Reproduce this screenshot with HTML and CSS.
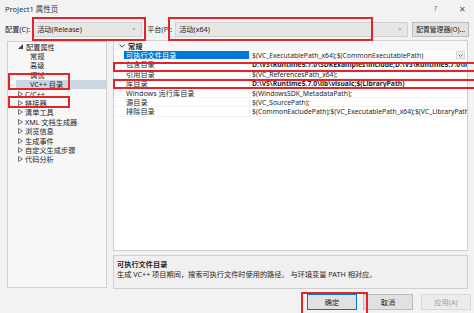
FILE: index.html
```html
<!DOCTYPE html>
<html lang="zh-CN">
<head>
    <meta charset="UTF-8">
    <meta name="viewport" content="width=device-width, initial-scale=1.0">
    <title>Project1 属性页</title>
    <link rel="stylesheet" href="styles.css">
</head>
<body>
    <div class="window">
        <!-- Barra de títol -->
        <div class="titlebar">
            <span class="title">Project1 属性页</span>
            <span class="help">?</span>
            <span class="close">✕</span>
        </div>

        <!-- Configuració i plataforma -->
        <div class="toolbar">
            <label class="lbl">配置(C):</label>
            <div class="combo combo-config"><span>活动(Release)</span><span class="arrow">⌄</span></div>
            <label class="lbl">平台(P):</label>
            <div class="combo combo-platform"><span>活动(x64)</span><span class="arrow">⌄</span></div>
            <div class="btn btn-manager">配置管理器(O)...</div>
        </div>

        <div class="main">
            <!-- Arbre de propietats -->
            <div class="tree">
                <div class="node root"><svg class="tri" width="5" height="5" viewBox="0 0 5 5"><path d="M5 0 L5 5 L0 5 Z" fill="#444"/></svg>配置属性</div>
                <div class="node leaf">常规</div>
                <div class="node leaf">高级</div>
                <div class="node leaf">调试</div>
                <div class="node leaf active">VC++ 目录</div>
                <div class="node"><svg class="tri" width="5" height="6" viewBox="0 0 5 6"><path d="M0.5 0.5 L4.5 3 L0.5 5.5 Z" fill="none" stroke="#555" stroke-width="0.8"/></svg>C/C++</div>
                <div class="node"><svg class="tri" width="5" height="6" viewBox="0 0 5 6"><path d="M0.5 0.5 L4.5 3 L0.5 5.5 Z" fill="none" stroke="#555" stroke-width="0.8"/></svg>链接器</div>
                <div class="node"><svg class="tri" width="5" height="6" viewBox="0 0 5 6"><path d="M0.5 0.5 L4.5 3 L0.5 5.5 Z" fill="none" stroke="#555" stroke-width="0.8"/></svg>清单工具</div>
                <div class="node"><svg class="tri" width="5" height="6" viewBox="0 0 5 6"><path d="M0.5 0.5 L4.5 3 L0.5 5.5 Z" fill="none" stroke="#555" stroke-width="0.8"/></svg>XML 文档生成器</div>
                <div class="node"><svg class="tri" width="5" height="6" viewBox="0 0 5 6"><path d="M0.5 0.5 L4.5 3 L0.5 5.5 Z" fill="none" stroke="#555" stroke-width="0.8"/></svg>浏览信息</div>
                <div class="node"><svg class="tri" width="5" height="6" viewBox="0 0 5 6"><path d="M0.5 0.5 L4.5 3 L0.5 5.5 Z" fill="none" stroke="#555" stroke-width="0.8"/></svg>生成事件</div>
                <div class="node"><svg class="tri" width="5" height="6" viewBox="0 0 5 6"><path d="M0.5 0.5 L4.5 3 L0.5 5.5 Z" fill="none" stroke="#555" stroke-width="0.8"/></svg>自定义生成步骤</div>
                <div class="node"><svg class="tri" width="5" height="6" viewBox="0 0 5 6"><path d="M0.5 0.5 L4.5 3 L0.5 5.5 Z" fill="none" stroke="#555" stroke-width="0.8"/></svg>代码分析</div>
            </div>

            <div class="right">
                <!-- Graella de propietats -->
                <div class="grid">
                    <div class="group"><svg class="chev" width="6" height="4" viewBox="0 0 6 4"><path d="M0.5 0.5 L3 3.2 L5.5 0.5" fill="none" stroke="#333" stroke-width="0.9"/></svg><b>常规</b></div>
                    <div class="row selected">
                        <div class="name">可执行文件目录</div>
                        <div class="value">$(VC_ExecutablePath_x64);$(CommonExecutablePath)</div>
                        <div class="drop"><svg width="5" height="3" viewBox="0 0 5 3"><path d="M0.5 0.5 L2.5 2.5 L4.5 0.5" fill="none" stroke="#555" stroke-width="0.8"/></svg></div>
                    </div>
                    <div class="row">
                        <div class="name">包含目录</div>
                        <div class="value bold">D:\VS\Runtime5.7.0\SDKExamples\include;D:\VS\Runtime5.7.0\inc</div>
                    </div>
                    <div class="row">
                        <div class="name">引用目录</div>
                        <div class="value">$(VC_ReferencesPath_x64);</div>
                    </div>
                    <div class="row">
                        <div class="name">库目录</div>
                        <div class="value bold">D:\VS\Runtime5.7.0\lib\visualc;$(LibraryPath)</div>
                    </div>
                    <div class="row">
                        <div class="name">Windows 运行库目录</div>
                        <div class="value">$(WindowsSDK_MetadataPath);</div>
                    </div>
                    <div class="row">
                        <div class="name">源目录</div>
                        <div class="value">$(VC_SourcePath);</div>
                    </div>
                    <div class="row">
                        <div class="name">排除目录</div>
                        <div class="value">$(CommonExcludePath);$(VC_ExecutablePath_x64);$(VC_LibraryPath_x64)</div>
                    </div>
                </div>

                <!-- Descripció -->
                <div class="desc">
                    <div class="desc-title">可执行文件目录</div>
                    <div class="desc-text">生成 VC++ 项目期间，搜索可执行文件时使用的路径。 与环境变量 PATH 相对应。</div>
                </div>
            </div>
        </div>

        <div class="buttons">
            <div class="btn btn-ok">确定</div>
            <div class="btn">取消</div>
            <div class="btn disabled">应用(A)</div>
        </div>

        <!-- Marques vermelles -->
        <div class="mark m-config"></div>
        <div class="mark m-platform"></div>
        <div class="mark m-vc"></div>
        <div class="mark m-linker"></div>
        <div class="mark m-include"></div>
        <div class="mark m-lib"></div>
        <div class="mark m-ok"></div>
    </div>
</body>
</html>
```

FILE: styles.css
```css
body {
    margin: 0;
    background-color: #f0f0f0;
    font-family: "Noto Sans", "Noto Sans CJK SC", sans-serif;
    font-size: 7.2px;
    color: #1e1e1e;
    overflow: hidden;
}
.window {
    position: relative;
    width: 474px;
    height: 313px;
    background-color: #f2f2f2;
}
.titlebar {
    display: flex;
    align-items: center;
    height: 16px;
    padding: 0 8px 0 5px;
    font-size: 7.5px;
    color: #333;
}
.title {
    flex: 1;
}
.help {
    margin-right: 22px;
    color: #666;
}
.close {
    color: #555;
    font-size: 8px;
}
.toolbar {
    display: flex;
    align-items: center;
    height: 24px;
    padding-left: 5px;
    margin-top: 1px;
}
.lbl {
    margin-right: 3px;
}
.combo {
    display: flex;
    align-items: center;
    justify-content: space-between;
    height: 15px;
    padding: 0 4px 0 3px;
    background-color: #e6e6e6;
    border: 1px solid #d0d0d0;
    box-sizing: border-box;
}
.combo .arrow {
    color: #777;
    font-size: 7px;
    margin-top: -4px;
}
.combo-config {
    width: 109px;
    margin-right: 5px;
}
.combo-platform {
    width: 233px;
    margin-right: 4px;
}
.btn {
    display: flex;
    align-items: center;
    justify-content: center;
    height: 15px;
    background-color: #e1e1e1;
    border: 1px solid #bcbcbc;
    box-sizing: border-box;
}
.btn-manager {
    width: 57px;
    font-size: 6.8px;
}
.main {
    display: flex;
    margin-top: 1px;
    height: 247px;
}
.tree {
    width: 100px;
    margin-left: 7px;
    margin-top: -1px;
    height: 247px;
    background-color: #f7f7f7;
    border: 1px solid #cfcfcf;
    box-sizing: border-box;
}
.node {
    display: flex;
    align-items: center;
    height: 9.4px;
    padding-left: 16px;
    white-space: nowrap;
}
.node .tri {
    margin-left: -6px;
    margin-right: 2px;
}
.node.root {
    padding-left: 10px;
}
.node.root .tri {
    margin-left: 0;
    margin-right: 3px;
}
.node.leaf {
    padding-left: 22px;
}
.node.active {
    background-color: #ccd5e2;
    margin-left: 8px;
    padding-left: 14px;
}
.right {
    display: flex;
    flex-direction: column;
    margin-left: 6px;
    width: 355px;
}
.grid {
    height: 212px;
    background-color: #fff;
    border: 1px solid #cfcfcf;
    box-sizing: border-box;
    margin-top: -2px;
}
.group {
    display: flex;
    align-items: center;
    height: 10px;
    padding-left: 5px;
    background-color: #f7f7f7;
}
.group .chev {
    margin-right: 3px;
}
.row {
    display: flex;
    height: 9.4px;
    line-height: 9.4px;
    border-bottom: 1px solid #f3f3f3;
    box-sizing: border-box;
    white-space: nowrap;
}
.name {
    width: 126px;
    margin-left: 10px;
    padding-left: 2px;
    box-sizing: border-box;
    border-right: 1px solid #ececec;
    overflow: hidden;
}
.value {
    flex: 1;
    padding-left: 2px;
    overflow: hidden;
    font-size: 6.8px;
}
.value.bold {
    font-weight: bold;
}
.row.selected .name {
    background-color: #0078d7;
    color: #fff;
}
.drop {
    display: flex;
    align-items: center;
    justify-content: center;
    width: 9px;
    height: 8px;
    margin: 0 2px 0 0;
    background-color: #f0f0f0;
    border: 1px solid #d8d8d8;
    box-sizing: border-box;
}
.desc {
    height: 34px;
    margin-top: 4px;
    padding: 3px 3px;
    border: 1px solid #cfcfcf;
    box-sizing: border-box;
    background-color: #f0f0f0;
}
.desc-title {
    font-weight: bold;
    line-height: 10px;
}
.desc-text {
    line-height: 10px;
}
.buttons {
    display: flex;
    justify-content: flex-end;
    gap: 8px;
    padding: 5px 3px 0 0;
}
.buttons .btn {
    width: 50px;
    height: 16px;
}
.btn-ok {
    border-color: #0078d7;
    margin-right: -2px;
}
.btn.disabled {
    color: #a0a0a0;
    background-color: #ececec;
    border-color: #d8d8d8;
}
.mark {
    position: absolute;
    border: 2px solid #e5242a;
    box-sizing: border-box;
}
.m-config { left: 32px; top: 17px; width: 114px; height: 24px; }
.m-platform { left: 168px; top: 17px; width: 205px; height: 24px; }
.m-vc { left: 8px; top: 73px; width: 62px; height: 17px; }
.m-linker { left: 8px; top: 96px; width: 62px; height: 12px; }
.m-include { left: 113px; top: 62px; width: 364px; height: 10px; }
.m-lib { left: 113px; top: 79px; width: 364px; height: 10px; }
.m-ok { left: 301px; top: 292px; width: 67px; height: 24px; }
```
